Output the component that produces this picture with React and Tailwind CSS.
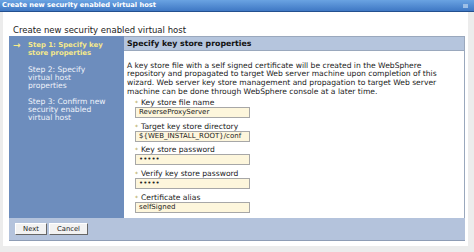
export default function App() {
  const fields = [
    { label: "Key store file name", value: "ReverseProxyServer" },
    { label: "Target key store directory", value: "${WEB_INSTALL_ROOT}/conf" },
    { label: "Key store password", value: "•••••" },
    { label: "Verify key store password", value: "•••••" },
    { label: "Certificate alias", value: "selfSigned" },
  ];

  return (
    <div
      className="flex h-[252px] w-[474px] flex-col overflow-hidden bg-[#ececec]"
      style={{ fontFamily: '"DejaVu Sans", Verdana, sans-serif' }}
    >
      {/* window title */}
      <div className="flex h-[12px] items-center justify-between border-b border-[#23508f] bg-gradient-to-b from-[#6aa3e2] to-[#3f78c4] pl-[2px] pr-[6px]">
        <span className="whitespace-nowrap text-[6.7px] font-bold leading-none text-white">
          Create new security enabled virtual host
        </span>
        <span className="h-[4px] w-[5px] bg-[#9dbfe6]" />
      </div>

      <div className="flex flex-1 pb-[6px] pl-[3px] pr-[6px]">
        <div className="flex flex-1 flex-col bg-white">
          <div className="whitespace-nowrap pl-[10px] pt-[13px] text-[8.5px] leading-[10px] text-[#222]">
            Create new security enabled virtual host
          </div>

          <div className="ml-[6px] mr-[3px] mt-[1px] flex flex-col">
            <div className="flex h-[182px]">
              {/* steps */}
              <div className="w-[115px] whitespace-nowrap bg-[#6d8dbd] pt-[4.5px] text-[7.6px] leading-[8px]">
                <div className="flex">
                  <span className="w-[19px] pl-[4px] text-[9px] font-bold leading-[8px] text-[#f5e98a]">→</span>
                  <span className="text-[6.9px] font-bold text-[#f5e98a]">
                    Step 1: Specify key
                    <br />
                    store properties
                  </span>
                </div>
                <div className="mt-[9.7px] pl-[19px] text-[#eef2fa]">
                  Step 2: Specify
                  <br />
                  virtual host
                  <br />
                  properties
                </div>
                <div className="mt-[8.3px] pl-[19px] text-[#eef2fa]">
                  Step 3: Confirm new
                  <br />
                  security enabled
                  <br />
                  virtual host
                </div>
              </div>

              {/* content */}
              <div className="flex flex-1 flex-col border-r border-[#9aa8bd]">
                <div className="flex h-[15px] items-center border-b border-t border-[#9aa8bd] bg-[#b5c5dd] pl-[3px] text-[7.8px] font-bold text-[#111]">
                  Specify key store properties
                </div>
                <div className="whitespace-nowrap pl-[3px] pt-[10.5px] text-[7.6px] leading-[8.7px] text-[#222]">
                  A key store file with a self signed certificate will be created in the WebSphere
                  <br />
                  repository and propagated to target Web server machine upon completion of this
                  <br />
                  wizard. Web server key store management and propagation to target Web server
                  <br />
                  machine can be done through WebSphere console at a later time.
                </div>
                <div className="flex flex-col gap-[3.7px] pl-[11px] pt-[1.5px]">
                  {fields.map((f) => (
                    <div key={f.label} className="flex flex-col">
                      <div className="flex h-[9px] items-center whitespace-nowrap text-[7.6px] leading-[9px] text-[#222]">
                        <span className="mr-[3px] text-[6px] text-[#a89a40]">*</span>
                        {f.label}
                      </div>
                      <div className="h-[11px] w-[115px] whitespace-nowrap border border-[#a7a7a7] bg-[#fdf6dc] pl-[3px] text-[7px] leading-[9px] text-[#222]">
                        {f.value}
                      </div>
                    </div>
                  ))}
                </div>
              </div>
            </div>

            {/* footer */}
            <div className="flex h-[23px] items-center gap-[2px] border-b border-[#8e9db5] bg-[#b4c3dc] pl-[6px]">
              <button className="h-[12px] w-[32px] border border-b-[#666] border-l-[#fff] border-r-[#666] border-t-[#fff] bg-[#f2f2f2] text-[6.8px] leading-none text-[#222]">
                Next
              </button>
              <button className="h-[12px] w-[39px] border border-b-[#666] border-l-[#fff] border-r-[#666] border-t-[#fff] bg-[#f2f2f2] text-[6.8px] leading-none text-[#222]">
                Cancel
              </button>
            </div>
          </div>
        </div>
      </div>
    </div>
  );
}
